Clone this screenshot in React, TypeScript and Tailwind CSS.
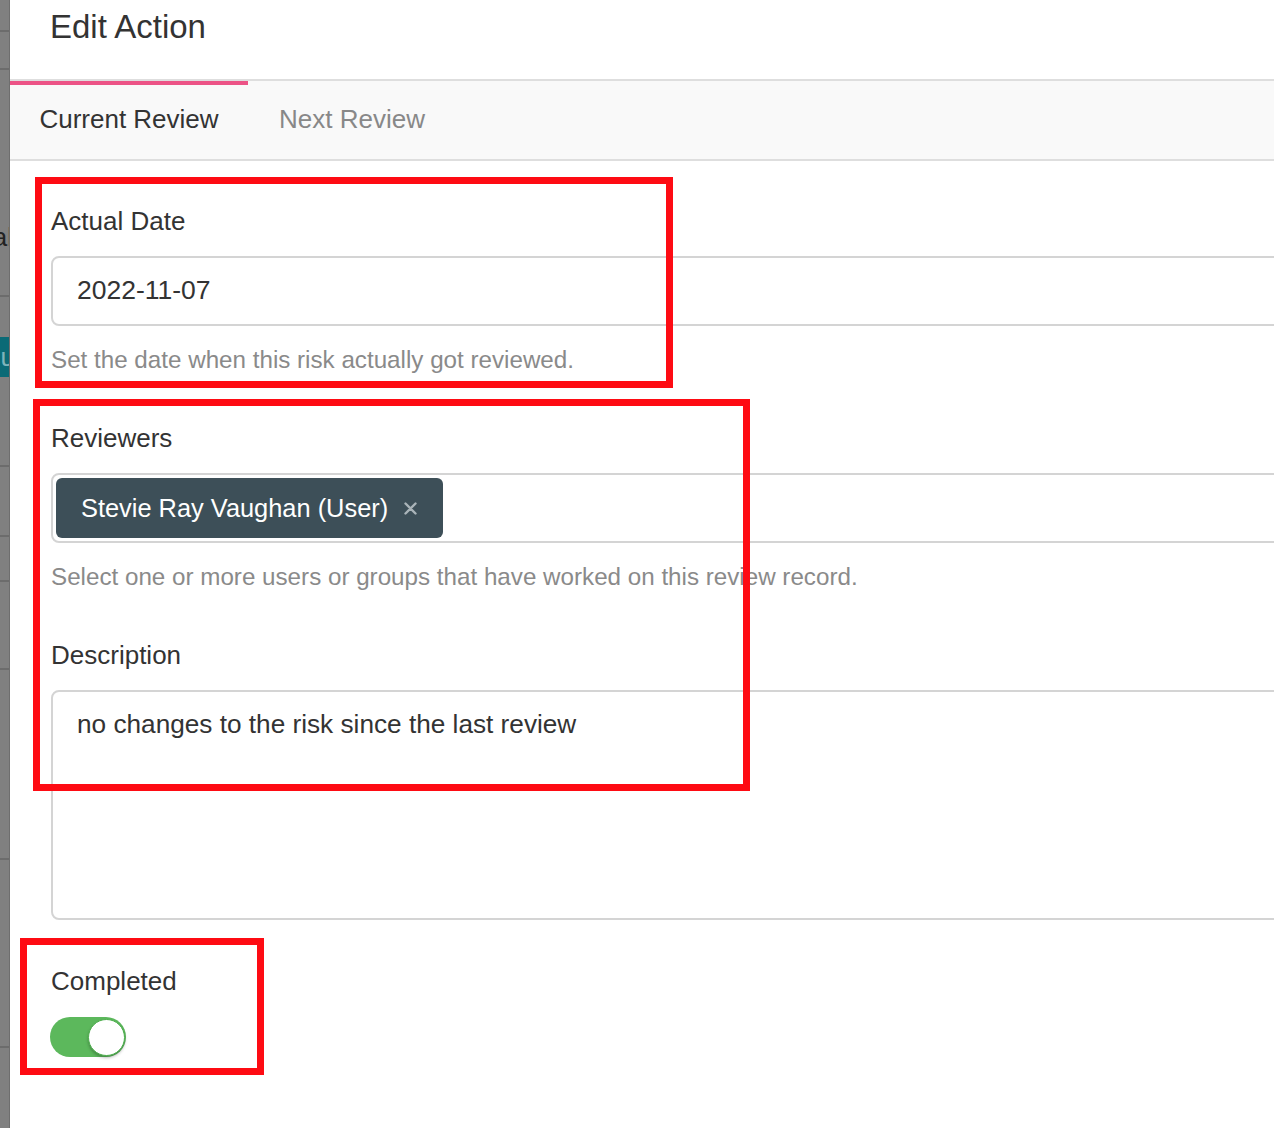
import React from "react";

const font = { fontFamily: '"Liberation Sans", Arial, Helvetica, sans-serif' };

function StripRow({
  h,
  line = true,
  children,
  teal = false,
  className = "items-center",
}: {
  h: number;
  line?: boolean;
  children?: React.ReactNode;
  teal?: boolean;
  className?: string;
}) {
  return (
    <div
      className={`flex-none overflow-hidden flex justify-end ${className} ${teal ? "bg-[#0b6a76]" : ""} ${line ? "border-b-2 border-[#6c6c6c]" : ""}`}
      style={{ height: h }}
    >
      {children}
    </div>
  );
}

function Label({ children }: { children: React.ReactNode }) {
  return <div className="text-[26px] leading-[37px] text-[#333333]">{children}</div>;
}

function Help({ children }: { children: React.ReactNode }) {
  return <div className="mt-[17px] text-[24.2px] leading-[34px] text-[#8a8a8a] whitespace-nowrap">{children}</div>;
}

export default function App() {
  return (
    <div className="relative w-[1274px] h-[1128px] overflow-hidden bg-white flex" style={font}>
      {/* background page strip */}
      <div className="flex-none w-[10px] h-full bg-[#808080] border-r border-[#6e6e6e] flex flex-col">
        <StripRow h={32} />
        <StripRow h={38} />
        <StripRow h={227} className="items-start pt-[152px]">
          <span className="text-[26px] leading-[30px] text-[#222] whitespace-nowrap -mr-[4px]">al</span>
        </StripRow>
        <StripRow h={40} line={false} />
        <StripRow h={40} line={false} teal>
          <span className="text-[26px] text-[#7fb3ba] whitespace-nowrap -mr-[6px]">su</span>
        </StripRow>
        <StripRow h={90} />
        <StripRow h={70} />
        <StripRow h={45} />
        <StripRow h={88} />
        <StripRow h={190} />
        <StripRow h={188} />
        <StripRow h={80} line={false} />
      </div>

      {/* modal panel */}
      <div className="flex-none w-[1400px] h-full bg-white flex flex-col">
        <div className="h-[79px] pt-[9px] pl-[40px]">
          <div className="text-[33px] leading-[36px] text-[#333333]">Edit Action</div>
        </div>

        <div className="h-[82px] border-t-2 border-b-2 border-[#dedede] bg-[#f9f9f9] flex">
          <div className="w-[238px] h-full flex items-center justify-center pb-[2px] text-[26px] leading-[30px] text-[#333333] shadow-[inset_0_4px_0_#ec5386]">
            Current Review
          </div>
          <div className="h-full px-[31px] flex items-center pb-[2px] text-[26px] leading-[30px] text-[#888888]">
            Next Review
          </div>
        </div>

        <div className="pl-[41px] pr-[41px] pt-[41.5px] flex flex-col">
          {/* Actual Date */}
          <Label>Actual Date</Label>
          <div className="mt-[16px] h-[70px] border-2 border-[#d4d4d4] rounded-[8px] px-[24px] flex items-center text-[26.5px] leading-[37px] text-[#333333]">
            2022-11-07
          </div>
          <Help>Set the date when this risk actually got reviewed.</Help>

          {/* Reviewers */}
          <div className="mt-[43px]">
            <Label>Reviewers</Label>
          </div>
          <div className="mt-[16px] h-[70px] border-2 border-[#d4d4d4] rounded-[8px] p-[3px] flex">
            <div className="h-[60px] rounded-[6px] bg-[#3d4f58] pl-[25px] pr-[26px] flex items-center gap-[16px]">
              <span className="text-[25.4px] leading-[30px] text-white whitespace-nowrap">Stevie Ray Vaughan (User)</span>
              <svg width="13" height="13" viewBox="0 0 13 13" className="flex-none mt-[2px]">
                <path d="M1.5 1.5 L11.5 11.5 M11.5 1.5 L1.5 11.5" stroke="#aab4b9" strokeWidth="2.4" strokeLinecap="round" />
              </svg>
            </div>
          </div>
          <Help>Select one or more users or groups that have worked on this review record.</Help>

          {/* Description */}
          <div className="mt-[43px]">
            <Label>Description</Label>
          </div>
          <div className="mt-[16px] h-[230px] border-2 border-[#d4d4d4] rounded-[8px] px-[24px] pt-[14.5px] text-[26.2px] leading-[37px] text-[#333333]">
            no changes to the risk since the last review
          </div>

          {/* Completed */}
          <div className="mt-[43px]">
            <Label>Completed</Label>
          </div>
          <div className="mt-[17.5px] w-[76px] h-[40px] rounded-full bg-[#5cb85c] flex items-center justify-end pr-[1px] -ml-[1px]">
            <div className="w-[37px] h-[37px] rounded-full bg-white border border-[#4cae4c] shadow-[0_2px_3px_rgba(0,0,0,0.25)]" />
          </div>
        </div>
      </div>

      {/* red annotation boxes */}
      <div className="absolute left-[35px] top-[177px] w-[638px] h-[211px] border-[7px] border-[#fe0b13] pointer-events-none" />
      <div className="absolute left-[33px] top-[399px] w-[717px] h-[392px] border-[7px] border-[#fe0b13] pointer-events-none" />
      <div className="absolute left-[20px] top-[938px] w-[244px] h-[137px] border-[7px] border-[#fe0b13] pointer-events-none" />
    </div>
  );
}
